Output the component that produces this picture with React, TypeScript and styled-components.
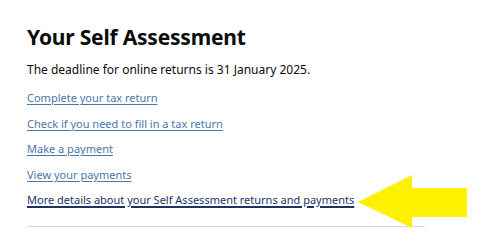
import * as React from "react";
import styled, { createGlobalStyle } from "styled-components";

const GlobalStyle = createGlobalStyle`
  html, body {
    margin: 0;
    padding: 0;
    background: #ffffff;
  }
  body {
    font-family: "Noto Sans", "Liberation Sans", Arial, sans-serif;
    color: #0b0c0c;
  }
`;

const links = [
  "Complete your tax return",
  "Check if you need to fill in a tax return",
  "Make a payment",
  "View your payments",
];

export default function App() {
  return (
    <>
      <GlobalStyle />
      <Page>
        <Section>
          <Heading>Your Self Assessment</Heading>
          <Deadline>The deadline for online returns is 31 January 2025.</Deadline>
          <LinkList>
            {links.map((label) => (
              <li key={label}>
                <TaskLink href="#">{label}</TaskLink>
              </li>
            ))}
            <li>
              <TaskLink href="#" $active>
                More details about your Self Assessment returns and payments
              </TaskLink>
            </li>
          </LinkList>
        </Section>
        <Arrow viewBox="0 0 109 53" aria-hidden="true">
          <polygon points="0,27 54,0 54,13 109,13 109,42 54,42 54,53" fill="#fff200" />
        </Arrow>
      </Page>
    </>
  );
}

const Page = styled.div`
  position: relative;
  width: 480px;
  height: 244px;
  padding: 24px 0 0 27px;
  box-sizing: border-box;
  overflow: hidden;
`;

const Section = styled.section`
  width: 398px;
  padding-bottom: 17px;
  border-bottom: 1px solid #dcdcdc;
`;

const Heading = styled.h2`
  margin: 0 0 11px;
  font-size: 21px;
  line-height: 26px;
  font-weight: 700;
  letter-spacing: -0.2px;
`;

const Deadline = styled.p`
  margin: 0 0 10px;
  font-size: 12px;
  line-height: 18px;
`;

const LinkList = styled.ul`
  list-style: none;
  margin: 0;
  padding: 0;
  display: flex;
  flex-direction: column;
  gap: 7.5px;
  font-size: 11px;
  line-height: 18px;
`;

const TaskLink = styled.a<{ $active?: boolean }>`
  color: ${(p) => (p.$active ? "#1d3366" : "#4a77a8")};
  text-decoration: underline;
  text-decoration-thickness: ${(p) => (p.$active ? "2px" : "1px")};
  text-underline-offset: 2px;
`;

const Arrow = styled.svg`
  position: absolute;
  left: 358px;
  top: 175px;
  width: 109px;
  height: 53px;
`;
